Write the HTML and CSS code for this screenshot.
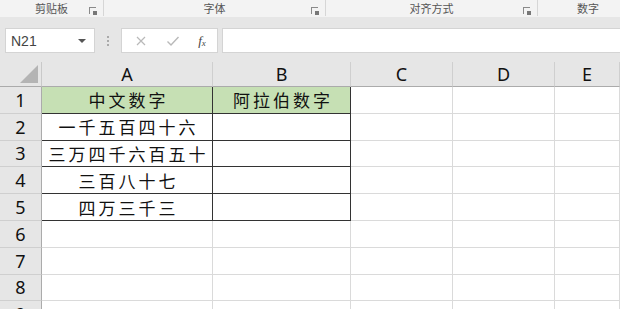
FILE: index.html
```html
<!DOCTYPE html>
<html lang="zh-CN">
<head>
    <meta charset="UTF-8">
    <meta name="viewport" content="width=device-width, initial-scale=1.0">
    <title>中文数字转换</title>
    <link rel="stylesheet" href="styles.css">
</head>
<body>
    <div class="ribbon">
        <div class="group group-clip">
            <span class="group-label">剪贴板</span>
            <span class="launcher"></span>
        </div>
        <div class="group group-font">
            <span class="group-label">字体</span>
            <span class="launcher"></span>
        </div>
        <div class="group group-align">
            <span class="group-label">对齐方式</span>
            <span class="launcher"></span>
        </div>
        <div class="group group-num">
            <span class="group-label">数字</span>
        </div>
    </div>

    <div class="formula-bar">
        <div class="name-box">
            <span>N21</span>
            <span class="caret"></span>
        </div>
        <div class="grip"><i></i><i></i><i></i></div>
        <div class="fx-buttons">
            <svg width="12" height="12" viewBox="0 0 12 12"><path d="M2 2 L10 10 M10 2 L2 10" stroke="#b9b9b9" stroke-width="1.2" fill="none"/></svg>
            <svg width="14" height="12" viewBox="0 0 14 12"><path d="M1.5 6.5 L5 10 L12.5 2" stroke="#b9b9b9" stroke-width="1.4" fill="none"/></svg>
            <span class="fx">f<sub>x</sub></span>
        </div>
        <div class="formula-input"></div>
    </div>

    <div class="sheet">
        <div class="corner"><span class="tri"></span></div>
        <div class="col-head">A</div>
        <div class="col-head">B</div>
        <div class="col-head">C</div>
        <div class="col-head">D</div>
        <div class="col-head">E</div>

        <div class="row-head">1</div>
        <div class="cell tbl title">中文数字</div>
        <div class="cell tbl title">阿拉伯数字</div>
        <div class="cell"></div><div class="cell"></div><div class="cell"></div>

        <div class="row-head">2</div>
        <div class="cell tbl">一千五百四十六</div>
        <div class="cell tbl"></div>
        <div class="cell"></div><div class="cell"></div><div class="cell"></div>

        <div class="row-head">3</div>
        <div class="cell tbl">三万四千六百五十</div>
        <div class="cell tbl"></div>
        <div class="cell"></div><div class="cell"></div><div class="cell"></div>

        <div class="row-head">4</div>
        <div class="cell tbl">三百八十七</div>
        <div class="cell tbl"></div>
        <div class="cell"></div><div class="cell"></div><div class="cell"></div>

        <div class="row-head">5</div>
        <div class="cell tbl">四万三千三</div>
        <div class="cell tbl"></div>
        <div class="cell"></div><div class="cell"></div><div class="cell"></div>

        <div class="row-head">6</div>
        <div class="cell"></div><div class="cell"></div><div class="cell"></div><div class="cell"></div><div class="cell"></div>

        <div class="row-head">7</div>
        <div class="cell"></div><div class="cell"></div><div class="cell"></div><div class="cell"></div><div class="cell"></div>

        <div class="row-head">8</div>
        <div class="cell"></div><div class="cell"></div><div class="cell"></div><div class="cell"></div><div class="cell"></div>

        <div class="row-head">9</div>
        <div class="cell"></div><div class="cell"></div><div class="cell"></div><div class="cell"></div><div class="cell"></div>
    </div>
</body>
</html>
```

FILE: styles.css
```css
* {
    margin: 0;
    padding: 0;
    box-sizing: border-box;
}

body {
    background-color: #e6e6e6;
    font-family: 'Noto Sans', 'Noto Sans CJK SC', sans-serif;
    width: 620px;
    height: 309px;
    overflow: hidden;
}

/* Ribbon group labels */
.ribbon {
    display: flex;
    height: 17px;
    background: #f3f3f3;
}

.group {
    position: relative;
    display: flex;
    justify-content: center;
    align-items: center;
    border-right: 1px solid #d6d6d6;
    height: 16px;
}

.group-clip { width: 104px; }
.group-font { width: 222px; }
.group-align { width: 212px; }
.group-num { flex: 1; border-right: none; padding-left: 18px; }

.group-label {
    font-family: 'Noto Sans CJK SC', sans-serif;
    font-size: 11px;
    color: #555;
    line-height: 14px;
}

.launcher {
    position: absolute;
    right: 7px;
    bottom: 2px;
    width: 7px;
    height: 7px;
    border-left: 1px solid #8a8a8a;
    border-top: 1px solid #8a8a8a;
}

.launcher::after {
    content: '';
    position: absolute;
    right: -1px;
    bottom: -1px;
    width: 4px;
    height: 4px;
    background: #777;
}

/* Formula bar */
.formula-bar {
    display: flex;
    align-items: stretch;
    height: 25px;
    margin-top: 11px;
    padding-left: 5px;
}

.name-box {
    width: 90px;
    background: #fff;
    border: 1px solid #d4d4d4;
    display: flex;
    align-items: center;
    justify-content: space-between;
    padding: 0 8px 0 5px;
    font-family: 'Liberation Sans', sans-serif;
    font-size: 14px;
    color: #444;
}

.caret {
    width: 0;
    height: 0;
    border-left: 4px solid transparent;
    border-right: 4px solid transparent;
    border-top: 4px solid #555;
}

.grip {
    width: 26px;
    display: flex;
    flex-direction: column;
    align-items: center;
    justify-content: center;
    gap: 2px;
}

.grip i {
    width: 2px;
    height: 2px;
    background: #aaa;
}

.fx-buttons {
    width: 97px;
    background: #fff;
    border: 1px solid #d4d4d4;
    display: flex;
    align-items: center;
    justify-content: space-around;
    padding: 0 2px 0 4px;
}

.fx {
    font-family: 'Liberation Serif', serif;
    font-style: italic;
    font-size: 13px;
    color: #444;
}

.fx sub {
    font-size: 9px;
    vertical-align: -1px;
}

.formula-input {
    flex: 1;
    margin-left: 4px;
    background: #fff;
    border: 1px solid #d4d4d4;
    border-right: none;
}

/* Sheet grid */
.sheet {
    display: grid;
    grid-template-columns: 42px 171px 138px 102px 102px 1fr;
    grid-template-rows: 25px repeat(9, 26.8px);
    margin-top: 9px;
    background: #fff;
}

.corner {
    background: #e6e6e6;
    border-right: 1px solid #c9c9c9;
    border-bottom: 1px solid #ababab;
    position: relative;
}

.tri {
    position: absolute;
    right: 3px;
    bottom: 3px;
    width: 0;
    height: 0;
    border-left: 18px solid transparent;
    border-bottom: 18px solid #b4b4b4;
}

.col-head {
    background: #e6e6e6;
    border-right: 1px solid #cfcfcf;
    border-bottom: 1px solid #ababab;
    display: flex;
    align-items: center;
    justify-content: center;
    font-size: 18px;
    color: #111;
}

.row-head {
    background: #e6e6e6;
    border-right: 1px solid #ababab;
    border-bottom: 1px solid #cfcfcf;
    display: flex;
    align-items: center;
    justify-content: center;
    font-size: 18px;
    color: #111;
}

.cell {
    border-right: 1px solid #dadada;
    border-bottom: 1px solid #dadada;
    display: flex;
    align-items: center;
    justify-content: center;
    font-family: 'Noto Sans CJK SC', sans-serif;
    font-size: 17px;
    letter-spacing: 3px;
    text-indent: 3px;
    color: #111;
    white-space: nowrap;
}

.cell.tbl {
    border-right-color: #333;
    border-bottom-color: #333;
}

.cell.title {
    background: #c6e0b4;
}
```
